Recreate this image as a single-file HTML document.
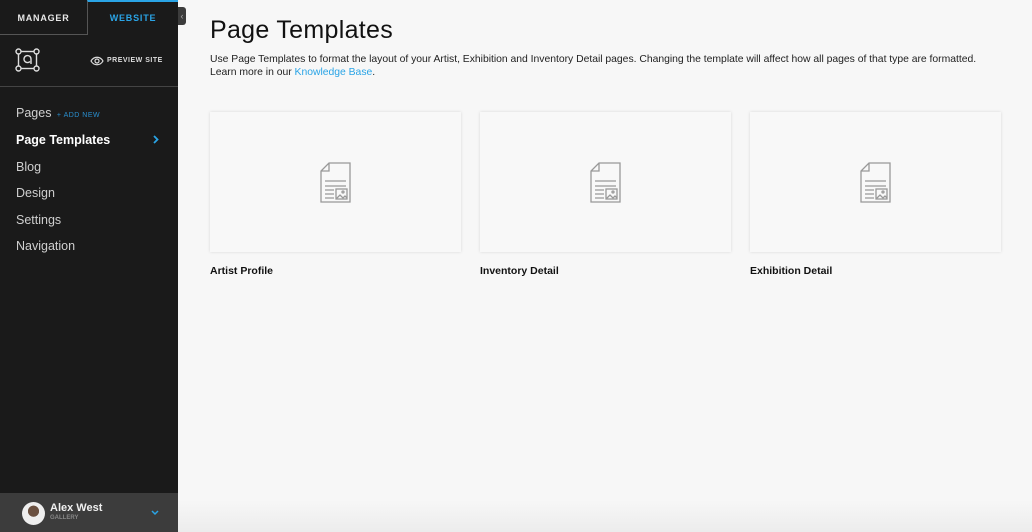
<!DOCTYPE html>
<html><head><style>
*{margin:0;padding:0;box-sizing:border-box}
body{width:1032px;height:532px;overflow:hidden;background:#f7f7f7;font-family:"Liberation Sans",sans-serif;position:relative}
.sb{position:absolute;left:0;top:0;width:178px;height:532px;background:#1a1a1a}
.tab{position:absolute;top:0;height:35px;font-size:9px;font-weight:bold;letter-spacing:.8px;text-align:center;line-height:37px}
.nav{position:absolute;left:16px;color:#cfcfcf;font-size:12.5px}
.card{position:absolute;top:112px;width:251px;height:140px;background:#f8f8f8;box-shadow:0 0 3px rgba(0,0,0,.13)}
.card svg{position:absolute;left:110px;top:50px}
.lbl{position:absolute;top:265px;font-size:10.5px;font-weight:bold;color:#111}
</style></head><body>
<div class="sb">
 <div class="tab" style="left:0;width:87px;color:#e8e8e8;border-bottom:1px solid #555">MANAGER</div>
 <div class="tab" style="left:87px;width:91px;color:#2aa4e6;border-left:1px solid #555;border-top:2px solid #2aa4e6;line-height:33px">WEBSITE</div>
 <svg style="position:absolute;left:15px;top:48px" width="25" height="24" viewBox="0 0 25 24" fill="none" stroke="#ddd" stroke-width="1.4"><rect x="3.5" y="3.5" width="18" height="17"/><circle cx="3.5" cy="3.5" r="2.5" fill="#1a1a1a"/><circle cx="21.5" cy="3.5" r="2.5" fill="#1a1a1a"/><circle cx="3.5" cy="20.5" r="2.5" fill="#1a1a1a"/><circle cx="21.5" cy="20.5" r="2.5" fill="#1a1a1a"/><path d="M16 16V11a3.5 3.5 0 1 0-1 2.5"/></svg>
 <svg style="position:absolute;left:90px;top:56px" width="14" height="10" viewBox="0 0 14 10" fill="none" stroke="#ddd" stroke-width="1.2"><path d="M1 5C4 0 10 0 13 5C10 10 4 10 1 5Z"/><circle cx="7" cy="5" r="2"/></svg>
 <div style="position:absolute;left:107px;top:57px;font-size:7px;font-weight:bold;color:#ddd;letter-spacing:.5px">PREVIEW SITE</div>
 <div style="position:absolute;left:0;top:86px;width:178px;border-top:1px solid #444"></div>
 <div class="nav" style="top:106px">Pages <span style="font-size:7px;color:#2a8fcf;letter-spacing:.5px;margin-left:2px">+ ADD NEW</span></div>
 <div class="nav" style="top:133px;color:#fff;font-weight:bold">Page Templates</div>
 <svg style="position:absolute;left:153px;top:135px" width="6" height="9" viewBox="0 0 6 9"><path d="M1 1l3.5 3.5L1 8" stroke="#2aa4e6" stroke-width="1.8" fill="none"/></svg>
 <div class="nav" style="top:160px">Blog</div>
 <div class="nav" style="top:186px">Design</div>
 <div class="nav" style="top:213px">Settings</div>
 <div class="nav" style="top:239px">Navigation</div>
 <div style="position:absolute;left:0;top:493px;width:178px;height:39px;background:#3c3c3c">
  <div style="position:absolute;left:22px;top:9px;width:23px;height:23px;border-radius:50%;background:radial-gradient(circle at 50% 40%,#6a5040 0 30%,#eee 32%)"></div>
  <div style="position:absolute;left:50px;top:9px;color:#f0f0f0;font-size:11px;font-weight:bold">Alex West</div>
  <div style="position:absolute;left:50px;top:22px;color:#888;font-size:6px;font-weight:bold">GALLERY</div>
  <svg style="position:absolute;left:151px;top:17px" width="8" height="6" viewBox="0 0 8 6"><path d="M1 1l3 3 3-3" stroke="#2aa4e6" stroke-width="1.5" fill="none"/></svg>
 </div>
</div>
<div style="position:absolute;left:178px;top:7px;width:8px;height:18px;background:#3c3c3c;border-radius:0 3px 3px 0;color:#aaa;font-size:9px;line-height:18px;text-align:center">‹</div>
<div style="position:absolute;left:210px;top:16px;font-size:25px;color:#111;font-weight:300;letter-spacing:.3px">Page Templates</div>
<div style="position:absolute;left:210px;top:54px;font-size:10.4px;line-height:12.5px;color:#222;width:800px;letter-spacing:-.02px">Use Page Templates to format the layout of your Artist, Exhibition and Inventory Detail pages. Changing the template will affect how all pages of that type are formatted.<br>Learn more in our <span style="color:#2aa4e6">Knowledge Base</span>.</div>
<div class="card" style="left:210px"><svg width="31" height="41" viewBox="0 0 31 41" fill="none" stroke="#999" stroke-width="1.3"><path d="M9 1H30V40H1V9Z M1 9H9V1"/><path d="M5 19H26M5 24H26M5 28H14M5 32H14M5 36H14"/><rect x="16" y="27" width="11" height="10"/><path d="M16 37l4-4 3 3 2-2 2 2"/><circle cx="23" cy="30" r="1"/></svg></div>
<div class="card" style="left:480px"><svg width="31" height="41" viewBox="0 0 31 41" fill="none" stroke="#999" stroke-width="1.3"><path d="M9 1H30V40H1V9Z M1 9H9V1"/><path d="M5 19H26M5 24H26M5 28H14M5 32H14M5 36H14"/><rect x="16" y="27" width="11" height="10"/><path d="M16 37l4-4 3 3 2-2 2 2"/><circle cx="23" cy="30" r="1"/></svg></div>
<div class="card" style="left:750px"><svg width="31" height="41" viewBox="0 0 31 41" fill="none" stroke="#999" stroke-width="1.3"><path d="M9 1H30V40H1V9Z M1 9H9V1"/><path d="M5 19H26M5 24H26M5 28H14M5 32H14M5 36H14"/><rect x="16" y="27" width="11" height="10"/><path d="M16 37l4-4 3 3 2-2 2 2"/><circle cx="23" cy="30" r="1"/></svg></div>
<div class="lbl" style="left:210px">Artist Profile</div>
<div class="lbl" style="left:480px">Inventory Detail</div>
<div class="lbl" style="left:750px">Exhibition Detail</div>
<div style="position:absolute;left:178px;top:500px;width:854px;height:32px;background:linear-gradient(#f7f7f700,#ececec)"></div>
</body></html>
